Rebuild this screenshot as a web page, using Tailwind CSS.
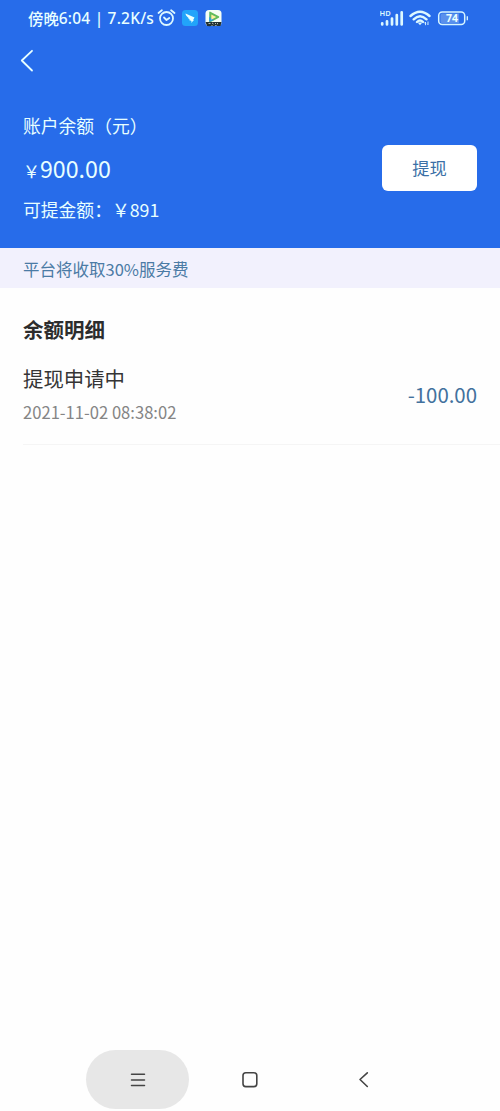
<!DOCTYPE html>
<html lang="zh-CN">
<head>
<meta charset="utf-8">
<title>账户余额</title>
<script src="https://cdn.jsdelivr.net/npm/@tailwindcss/browser@4"></script>
</head>
<body class="bg-white">
<div class="flex h-[1111px] w-[500px] flex-col overflow-hidden bg-[#fefefe] font-['Noto_Sans_CJK_SC',sans-serif]">
  <header class="h-[248px] shrink-0 bg-[#276cea] text-[#e8ffff]">
    <div class="flex h-9 items-center pr-8 pl-7 whitespace-nowrap">
      <span class="text-[15.4px] leading-[34px] font-medium">傍晚</span>
      <span class="w-[98px] font-['Noto_Sans',sans-serif] text-[15.5px] leading-9 font-medium tracking-[0.2px]">6:04 | 7.2K/s</span>
      <svg class="ml-0 h-5 w-5 shrink-0" viewBox="0 0 20 20" fill="none" stroke="#dcf8ff" stroke-width="1.8" stroke-linecap="round" stroke-linejoin="round"><circle cx="9.500" cy="10.5" r="6.5"/><path d="M1.500 5 4.900 2.3M17.500 5l-3.4-2.7M7 9.500 9.500 12l2.800-2"/></svg>
      <svg class="ml-[5px] h-4 w-4 shrink-0" viewBox="0 0 16 16"><rect width="16" height="16" rx="3.5" fill="#22a4fa"/><path d="M3.500 3.400 12.500 7.500l-1.300 2.500h.8l-2.800 3 .3-2-2.600-1.100 1-.4-2.300-1.700 1-.1C4.500 6.500 3.700 5 3.500 3.400z" fill="#e9ffff"/></svg>
      <svg class="ml-[7px] h-[17px] w-[17px] shrink-0" viewBox="0 0 17 17"><rect x=".5" width="16" height="16" rx="3.500" fill="#f5fff5"/><path d="M5 2.300 13.500 7 5 11.500z" fill="#62bc5d" stroke="#62bc5d" stroke-width="1.500" stroke-linejoin="round"/><path d="M4.300 2v5L9 10l-4 1.800q-1 .2-1-.8z" fill="#319fdd"/><path d="M6.300 4.500 11.200 7l-4.900 2.700z" fill="#fff0a0"/><path d="M.500 12H16.500L15.500 16H12l-1-.7-2 1-2-.8-2 .8-3-.3z" fill="#233132"/><path d="M3.500 13.500h2M7 13l1.500 1M10 13.500h1M12.500 13v1.200" stroke="#d9e5d9" stroke-width=".8"/></svg>
      <svg class="ml-auto h-5 w-[88px] shrink-0" viewBox="0 0 88 20" fill="none">
        <text x="-.5" y="7.500" font-family="Noto Sans" font-size="7.500" font-weight="600" fill="#dcf8ff">HD</text>
        <path d="M2.200 15.300v1.200M7 13.300v3.200M12 10.500v6M16.800 7v9.500M21.700 4.300v12.200" stroke="#dcf8ff" stroke-width="2.700" stroke-linecap="round"/>
        <path d="M30.500 8Q40 -.5 49.500 8M33.700 11.300Q40 5 46.500 11.300M37 14Q40 11 43 14" stroke="#dcf8ff" stroke-width="2.400" stroke-linecap="round"/>
        <path d="M37.700 14.500h4.600L40 17.200z" fill="#dcf8ff"/><path d="M45.500 14v3.200M48 13.500v3.200M44.700 15.300l.8-1.300M47.200 15.700l.8 1" stroke="#dcf8ff" stroke-width=".9"/>
        <rect x="58.700" y="4" width="26" height="12.500" rx="3.500" stroke="#d7f5ff" stroke-width="1.500"/>
        <path d="M60.500 7q0-1.500 1.500-1.500h17v9.500H62q-1.500 0-1.500-1.500z" fill="#5a90ec"/>
        <path d="M87.300 8.300v4" stroke="#dcf8ff" stroke-width="1.300"/>
        <text x="72" y="14.200" text-anchor="middle" font-family="Noto Sans" font-size="10.500" font-weight="700" fill="#eaffff">74</text>
      </svg>
    </div>
    <div class="flex h-[50px] items-center pl-5">
      <svg class="h-6 w-4" viewBox="0 0 16 24" fill="none" stroke="#e8ffff" stroke-width="1.800" stroke-linecap="round" stroke-linejoin="round"><path d="M12 1.800 1.800 11.500 12 21.500"/></svg>
    </div>
    <div class="flex items-start justify-between pt-[23px] pr-[23px] pl-[23px]">
      <div class="whitespace-nowrap">
        <div class="h-8 text-[17.8px] leading-8">账户余额（元）</div>
        <div class="flex h-[52px] items-baseline"><span class="w-[17px] text-[17px] leading-[54px]">￥</span><span class="text-[23.200px] leading-[54px]">900.00</span></div>
        <div class="h-8 text-[17.8px] leading-8">可提金额：￥891</div>
      </div>
      <button class="mt-[36px] h-[46px] w-[95px] rounded-[6px] bg-white text-[17.300px] text-[#3b70a6]">提现</button>
    </div>
  </header>
  <div class="h-10 shrink-0 bg-[#f2f1fd] pl-[23px] text-[16.500px] leading-[42px] text-[#4b7ba5]">平台将收取30%服务费</div>
  <main class="flex-1 pl-[23px]">
    <h1 class="pt-[25px] text-[20.500px] leading-8 font-bold text-[#2d2d2d]">余额明细</h1>
    <div class="mt-[15px] flex h-[85px] items-start justify-between border-b border-[#f5f5f5] pr-[23px]">
      <div>
        <div class="mt-[2px] h-8 text-[20.400px] leading-8 text-[#353535]">提现申请中</div>
        <div class="h-8 text-[16.600px] leading-9 text-[#858585]">2021-11-02 08:38:02</div>
      </div>
      <div class="mt-[18px] text-[20.400px] leading-8 text-[#42719d]">-100.00</div>
    </div>
  </main>
  <nav class="flex h-[61px] shrink-0 items-start pl-[86px]">
    <div class="flex h-[59px] w-[103px] items-center justify-center rounded-full bg-[#e7e7e7]">
      <svg class="h-4 w-4" viewBox="0 0 16 16" stroke="#444" stroke-width="1.500" stroke-linecap="round"><path d="M1.500 2.200h13M1.500 7.900h13M1.500 13.500h13"/></svg>
    </div>
    <svg class="mt-[21px] ml-[52px] h-[18px] w-[18px]" viewBox="0 0 18 18" fill="none" stroke="#444" stroke-width="1.600"><rect x="2" y="1.800" width="13.800" height="13.800" rx="2.800"/></svg>
    <svg class="mt-[21px] ml-[99px] h-[18px] w-3" viewBox="0 0 12 18" fill="none" stroke="#444" stroke-width="1.600" stroke-linecap="round" stroke-linejoin="round"><path d="M9.300 1.800 2 8.500 9.300 15.500"/></svg>
  </nav>
</div>
</body>
</html>
